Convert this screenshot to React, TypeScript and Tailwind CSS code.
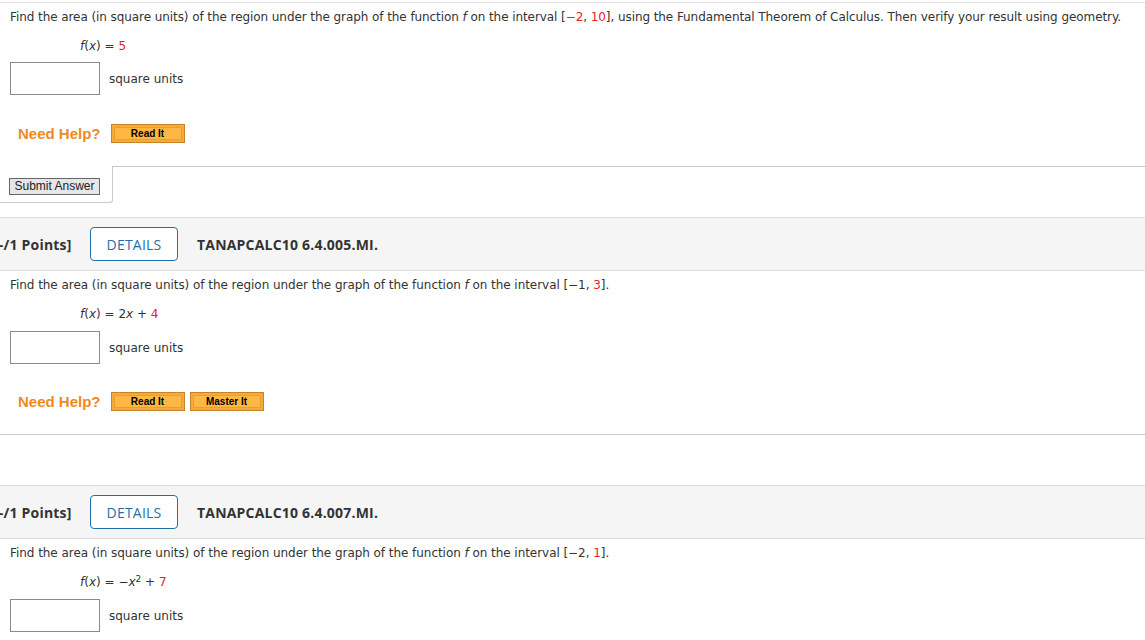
const body = "font-['DejaVu_Sans',Verdana,Tahoma,sans-serif] text-[12px] text-[#333]";
const head = "font-['Open_Sans',sans-serif]";
const arial = "font-['Liberation_Sans',Arial,sans-serif]";

function Red({ children }: { children: React.ReactNode }) {
  return <span className="text-[#e8202a]">{children}</span>;
}

function Answer() {
  return (
    <div className="flex items-center">
      <div className="w-[90px] h-[33px] border border-[#8a8a8a] bg-white" />
      <span className="ml-[9px] pt-[1px]">square units</span>
    </div>
  );
}

function OrangeBtn({ label }: { label: string }) {
  return (
    <button
      className={`${arial} w-[74px] h-[19px] border border-[#c7822a] bg-[#f7a93a] p-[2px] flex`}
    >
      <span className="flex-1 flex items-center justify-center border border-[#e79f3a] bg-[#fdb843] text-[10px] font-bold text-black leading-none">
        {label}
      </span>
    </button>
  );
}

function NeedHelp({ master }: { master?: boolean }) {
  return (
    <div className="flex items-center h-[19px] pl-[18px]">
      <span className={`${arial} text-[15px] font-bold text-[#ee8a1f] mr-[10px] leading-none`}>Need Help?</span>
      <OrangeBtn label="Read It" />
      {master && (
        <div className="ml-[5px]">
          <OrangeBtn label="Master It" />
        </div>
      )}
    </div>
  );
}

function Header({ code }: { code: string }) {
  return (
    <div className={`${head} h-[54px] border-y border-[#dcdcdc] bg-[#f5f5f5] flex items-center text-[14px]`}>
      <span className="font-bold text-[#333] ml-[-6px] w-[78px] whitespace-nowrap tracking-[0.2px]">[-/1 Points]</span>
      <button className="ml-[18px] w-[88px] h-[34px] rounded-[4px] border border-[#1f6fa8] bg-white text-[#1f6fa8] text-[14px] tracking-[0.2px]">
        DETAILS
      </button>
      <span className="ml-[19px] font-bold text-[#333] tracking-[0.2px]">{code}</span>
    </div>
  );
}

function Fx({ children }: { children: React.ReactNode }) {
  return <div className="pl-[70px] leading-[16px]">{children}</div>;
}

export default function App() {
  return (
    <div className={`${body} w-[1145px] h-[640px] overflow-hidden bg-white`}>
      <div className="h-[2px]" />
      <div className="border-t border-[#dedede]" />

      {/* question 1 */}
      <div className="pl-[10px]">
        <p className="mt-[6px] leading-[16px] whitespace-nowrap tracking-[-0.075px]">
          Find the area (in square units) of the region under the graph of the function <i>f</i> on the interval [<Red>−2</Red>, <Red>10</Red>], using the Fundamental Theorem of Calculus. Then verify your result using geometry.
        </p>
        <div className="mt-[13px]">
          <Fx>
            <i>f</i>(<i>x</i>) = <Red>5</Red>
          </Fx>
        </div>
        <div className="mt-[8px]">
          <Answer />
        </div>
      </div>
      <div className="mt-[29px]">
        <NeedHelp />
      </div>

      <div className="mt-[23px] flex">
        <div className="w-[113px] h-[37px] border-r border-b border-[#c8c8c8] rounded-br-[3px] pl-[9px] pt-[11px]">
          <button className={`${arial} h-[17px] w-[91px] border border-[#666] bg-[#e6e6e6] text-[12px] text-[#222] leading-none`}>
            Submit Answer
          </button>
        </div>
        <div className="flex-1 border-t border-[#c8c8c8]" />
      </div>

      {/* question 2 */}
      <div className="mt-[14px]">
        <Header code="TANAPCALC10 6.4.005.MI." />
      </div>
      <div className="pl-[10px]">
        <p className="mt-[6px] leading-[16px] whitespace-nowrap tracking-[-0.05px]">
          Find the area (in square units) of the region under the graph of the function <i>f</i> on the interval [−1, <Red>3</Red>].
        </p>
        <div className="mt-[13px]">
          <Fx>
            <i>f</i>(<i>x</i>) = 2<i>x</i> + <Red>4</Red>
          </Fx>
        </div>
        <div className="mt-[9px]">
          <Answer />
        </div>
      </div>
      <div className="mt-[28px]">
        <NeedHelp master />
      </div>
      <div className="mt-[23px] border-t border-[#c8c8c8]" />

      {/* question 3 */}
      <div className="mt-[50px]">
        <Header code="TANAPCALC10 6.4.007.MI." />
      </div>
      <div className="pl-[10px]">
        <p className="mt-[6px] leading-[16px] whitespace-nowrap tracking-[-0.05px]">
          Find the area (in square units) of the region under the graph of the function <i>f</i> on the interval [−2, <Red>1</Red>].
        </p>
        <div className="mt-[13px]">
          <Fx>
            <i>f</i>(<i>x</i>) = −<i>x</i>
            <sup className="text-[9px]">2</sup> + <Red>7</Red>
          </Fx>
        </div>
        <div className="mt-[9px]">
          <Answer />
        </div>
      </div>
    </div>
  );
}
